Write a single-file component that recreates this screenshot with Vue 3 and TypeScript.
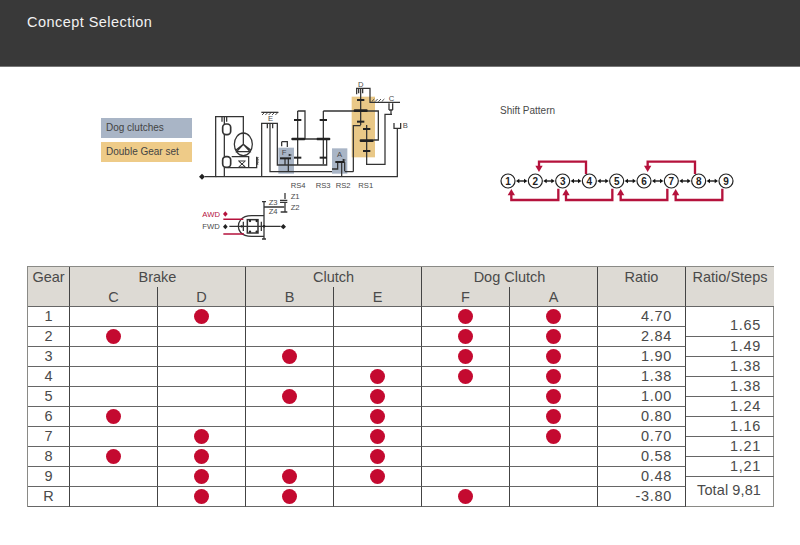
<script setup lang="ts">
interface Row { gear: string; on: string[]; ratio: string }
const cols = ['C', 'D', 'B', 'E', 'F', 'A']
const rows: Row[] = [
  { gear: '1', on: ['D', 'F', 'A'], ratio: '4.70' },
  { gear: '2', on: ['C', 'F', 'A'], ratio: '2.84' },
  { gear: '3', on: ['B', 'F', 'A'], ratio: '1.90' },
  { gear: '4', on: ['E', 'F', 'A'], ratio: '1.38' },
  { gear: '5', on: ['B', 'E', 'A'], ratio: '1.00' },
  { gear: '6', on: ['C', 'E', 'A'], ratio: '0.80' },
  { gear: '7', on: ['D', 'E', 'A'], ratio: '0.70' },
  { gear: '8', on: ['C', 'D', 'E'], ratio: '0.58' },
  { gear: '9', on: ['D', 'B', 'E'], ratio: '0.48' },
  { gear: 'R', on: ['D', 'B', 'F'], ratio: '-3.80' },
]
const steps = ['1.65', '1.49', '1.38', '1.38', '1.24', '1.16', '1.21', '1,21', 'Total 9,81']
const groups = ['Brake', 'Clutch', 'Dog Clutch']

const nodeX = [54, 136, 218, 298, 380, 462, 544, 626, 708]
const links = nodeX.slice(0, -1).map((x, i) => ({ a: x + 24, b: nodeX[i + 1] - 24 }))
const topArrows = [
  { from: 288, to: 147 },
  { from: 615, to: 473 },
]
const bottomArrows = [
  { from: 205, to: 64 },
  { from: 367, to: 228 },
  { from: 532, to: 392 },
  { from: 697, to: 557 },
]
const caps: [number, number][] = [
  [323, 135], [323, 248], [400, 135], [400, 248],
  [512, 75], [512, 140], [530, 162], [530, 228],
]
const bars: [number, number][] = [
  [325, 192], [400, 192], [512, 107], [530, 197],
]
const pumps: [number, number][] = [[110, 163], [110, 261]]
</script>

<template>
  <div class="page">
    <header class="top">Concept Selection</header>

    <section class="diagrams">
      <div class="legend">
        <div class="legend-item dog">Dog clutches</div>
        <div class="legend-item dbl">Double Gear set</div>
      </div>

      <svg class="gearbox" viewBox="6 0 714 510" width="238" height="170">
        <rect x="265" y="218" width="47" height="78" fill="#a9b5c6" />
        <rect x="426" y="220" width="46" height="76" fill="#a9b5c6" />
        <rect x="485" y="65" width="70" height="182" fill="#e9c887" />
        <g fill="none" stroke="#333" stroke-width="3.8">
          <path d="M45 305H77V125H160V178" />
          <path d="M96 125V140M110 125V140M103 125V147M103 178V245M103 277V305" />
          <path d="M77 305H622V160" />
          <rect v-for="p in pumps" :key="p[1]" :x="p[0] - 12" :y="p[1] - 16" width="24" height="32" rx="10" stroke-width="5" />
          <ellipse cx="160" cy="208" rx="27" ry="34" />
          <path d="M160 176V208M160 208L137 226M160 208L183 226M140 230H180L160 208Z" />
          <path d="M125 245H176V255M176 278V255" />
          <path d="M146 258H166L146 276H166ZM146 258L166 276" stroke-width="3" />
          <path d="M113 278H200V245" />
          <path d="M200 248h5l-5 5h5l-5 5h5l-5 5h5l-5 5h5" stroke-width="2.4" />
          <path d="M215 305V145H232V160M248 145V160M232 145H262V270H410V195" />
          <path d="M240 145V290H426" />
          <path d="M214 112H265" />
          <path d="M216 120L224 112M226 120L234 112M236 120L244 112M246 120L254 112M256 120L264 112" stroke-width="2.6" />
          <path d="M323 108V270M323 108H345V192H380M400 108V268M400 108H565V195H550" />
          <path d="M275 200H292V216M275 200V214" />
          <path d="M285 250V270M295 250V290" />
          <path d="M443 262V282H426M455 260V305M464 262V288" />
          <path d="M490 290V152H512M490 290H464" />
          <path d="M512 40V150M530 150V268H585V118H606" />
          <path d="M500 58V40H540V82H630" />
          <path d="M506 40V55M518 40V55" />
          <path d="M545 80L553 72M555 80L563 72M565 80L573 72M575 80L583 72" stroke-width="2.6" />
          <path d="M597 85V105M608 85V105M597 105H608M603 105V118" />
          <path d="M612 144V160H632V144" />
          <!-- AWD / FWD section -->
          <path d="M285 354V372M270 376H292M270 382H292M285 382V410M272 411H292" />
          <path d="M222 380V492M216 380H228M216 492H228M222 396H283" />
          <path d="M118 454H272" />
          <path d="M185 422H222M185 484H222M185 422C150 422 145 445 145 454C145 463 150 484 185 484" />
          <rect x="172" y="434" width="32" height="40" stroke-width="4.5" />
          <path d="M160 440V468M214 440V468" />
        </g>
        <g fill="#222">
          <rect v-for="c in caps" :key="`c${c[0]}-${c[1]}`" :x="c[0] - 11" :y="c[1] - 3" width="22" height="6" />
          <rect v-for="b in bars" :key="`b${b[0]}-${b[1]}`" :x="b[0] - 21" :y="b[1] - 4" width="42" height="8" rx="3" />
          <rect x="270" y="247" width="33" height="6" />
          <rect x="436" y="258" width="28" height="6" />
          <path d="M296 236L306 240L296 244Z" />
          <path d="M458 251L468 255L458 259Z" />
          <path d="M36 296L45 305L36 314L27 305Z" />
          <path d="M106 447L113 455L106 463L99 455Z" />
          <path d="M280 447L288 455L280 463L272 455Z" />
          <circle cx="222" cy="454" r="4" />
          <circle cx="180" cy="438" r="3.5" />
          <circle cx="200" cy="438" r="3.5" />
          <circle cx="180" cy="470" r="3.5" />
          <circle cx="200" cy="470" r="3.5" />
          <circle cx="155" cy="454" r="3.5" />
        </g>
        <g fill="none" stroke="#b5123c" stroke-width="4.5">
          <path d="M100 433H160M100 477H162" />
        </g>
        <path d="M106 409L113 417L106 425L99 417Z" fill="#b5123c" />
        <g class="labels">
          <text x="504" y="37">D</text>
          <text x="596" y="77">C</text>
          <text x="638" y="159">B</text>
          <text x="234" y="138">E</text>
          <text x="275" y="240">F</text>
          <text x="441" y="245">A</text>
          <text x="302" y="340">RS4</text>
          <text x="377" y="340">RS3</text>
          <text x="437" y="340">RS2</text>
          <text x="505" y="340">RS1</text>
          <text x="302" y="373">Z1</text>
          <text x="302" y="404">Z2</text>
          <text x="236" y="391">Z3</text>
          <text x="236" y="417">Z4</text>
          <text x="37" y="425" class="awd">AWD</text>
          <text x="37" y="463">FWD</text>
        </g>
      </svg>

      <div class="shift">
        <div class="shift-title">Shift Pattern</div>
        <svg viewBox="0 180 780 180" width="260" height="60">
          <g v-for="l in links" :key="l.a" fill="#111">
            <path :d="`M${l.a + 6} 258H${l.b - 6}`" stroke="#111" stroke-width="4" fill="none" />
            <path :d="`M${l.a} 258l10 -7v14z`" />
            <path :d="`M${l.b} 258l-10 -7v14z`" />
          </g>
          <g v-for="(x, i) in nodeX" :key="x">
            <circle :cx="x" cy="258" r="21" fill="#fff" stroke="#222" stroke-width="3.6" />
            <text :x="x" y="269" class="node">{{ i + 1 }}</text>
          </g>
          <g v-for="a in topArrows" :key="a.from">
            <path :d="`M${a.from} 237V200H${a.to}V216`" fill="none" stroke="#b5123c" stroke-width="7" />
            <path :d="`M${a.to - 11} 212H${a.to + 11}L${a.to} 231Z`" fill="#b5123c" />
          </g>
          <g v-for="a in bottomArrows" :key="a.from">
            <path :d="`M${a.from} 281V315H${a.to}V298`" fill="none" stroke="#b5123c" stroke-width="7" />
            <path :d="`M${a.to - 11} 301H${a.to + 11}L${a.to} 282Z`" fill="#b5123c" />
          </g>
        </svg>
      </div>
    </section>

    <section class="table">
      <div class="cell head gear-head">Gear</div>
      <div v-for="g in groups" :key="g" class="cell head group">{{ g }}</div>
      <div class="cell head ratio-head">Ratio</div>
      <div class="cell head steps-head">Ratio/Steps</div>
      <div v-for="c in cols" :key="c" class="cell head sub">{{ c }}</div>
      <div class="cell head steps-sub"></div>

      <template v-for="r in rows" :key="r.gear">
        <div class="cell">{{ r.gear }}</div>
        <div v-for="c in cols" :key="c" class="cell">
          <span v-if="r.on.includes(c)" class="dot"></span>
        </div>
        <div class="cell ratio">{{ r.ratio }}</div>
      </template>

      <div class="steps">
        <div v-for="(s, i) in steps" :key="i" class="step" :class="{ first: i === 0, last: i === steps.length - 1 }">{{ s }}</div>
      </div>
    </section>
  </div>
</template>

<style scoped>
.page {
  width: 800px;
  height: 545px;
  overflow: hidden;
  background: #fff;
  font-family: "Liberation Sans", Arial, sans-serif;
  color: #4a4a4a;
}
.top {
  height: 67px;
  box-sizing: border-box;
  padding: 14px 27px 0;
  background: #393939;
  border-bottom: 1px solid #777;
  color: #f2f2f2;
  font-size: 14.5px;
  letter-spacing: 0.45px;
  line-height: 16px;
}
.diagrams {
  display: flex;
  align-items: flex-start;
  height: 199px;
  padding-left: 101px;
}
.legend {
  width: 91px;
  margin-top: 51px;
  display: flex;
  flex-direction: column;
  gap: 4px;
}
.legend-item {
  height: 20px;
  line-height: 20px;
  padding-left: 5px;
  font-size: 10px;
  color: #444;
}
.dog { background: #a9b5c6; }
.dbl { background: #eecb88; }
.gearbox {
  display: block;
  margin-top: 8px;
  flex: none;
}
.labels text {
  font-size: 23px;
  fill: #4a4a4a;
}
.labels .awd { fill: #b5123c; }
.shift {
  margin-left: 60px;
  margin-top: 38px;
  flex: none;
}
.shift-title {
  padding-left: 10px;
  font-size: 10px;
  line-height: 12px;
  margin-bottom: 38px;
}
.shift svg { display: block; }
.node {
  font-size: 30px;
  font-weight: 700;
  text-anchor: middle;
  fill: #222;
}
.table {
  margin-left: 27px;
  width: 747px;
  box-sizing: border-box;
  border: 1px solid #8a8a86;
  border-bottom: 0;
  display: grid;
  grid-template-columns: 42px repeat(7, 88px) 88px;
  grid-template-rows: repeat(12, 20px);
  font-size: 14.5px;
  color: #4a4a4a;
}
.cell {
  box-sizing: border-box;
  border-right: 1px solid #444;
  border-bottom: 1px solid #666;
  display: flex;
  align-items: center;
  justify-content: center;
  line-height: 19px;
}
.head { background: #dddad4; }
.sub { padding-top: 2px; }
.gear-head {
  grid-row: span 2;
  align-items: flex-start;
  padding-top: 1px;
}
.group {
  grid-column: span 2;
  border-bottom: 0;
  padding-top: 1px;
}
.ratio-head {
  grid-row: span 2;
  align-items: flex-start;
  padding-top: 1px;
}
.steps-head {
  border-right: 0;
  border-bottom: 0;
  white-space: nowrap;
  padding-top: 1px;
}
.steps-sub { border-right: 0; }
.ratio {
  justify-content: flex-end;
  padding-right: 13px;
  letter-spacing: 0.7px;
}
.dot {
  width: 15px;
  height: 15px;
  border-radius: 50%;
  background: #c40a30;
}
.steps {
  grid-column: 9;
  grid-row: 3 / span 10;
  display: flex;
  flex-direction: column;
}
.step {
  box-sizing: border-box;
  height: 20px;
  padding-right: 13px;
  text-align: right;
  line-height: 19px;
  letter-spacing: 0.7px;
  border-bottom: 1px solid #666;
}
.step.first {
  height: 30px;
  line-height: 37px;
}
.step.last {
  height: 30px;
  line-height: 26px;
  letter-spacing: 0.1px;
  border-bottom-color: #8a8a86;
}
</style>
